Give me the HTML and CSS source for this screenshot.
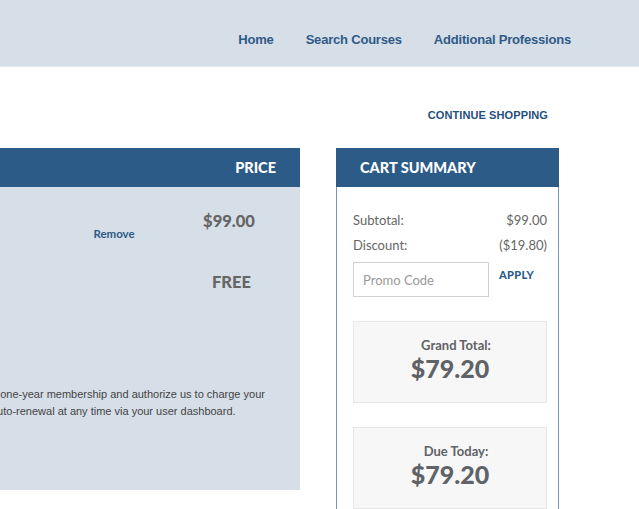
FILE: index.html
```html
<!DOCTYPE html>
<html lang="en">
<head>
<meta charset="utf-8">
<title>Cart</title>
<link rel="stylesheet" href="styles.css">
</head>
<body>
<header class="topbar">
  <nav class="nav">
    <a class="nav-link" href="#">Home</a>
    <a class="nav-link" href="#">Search Courses</a>
    <a class="nav-link" href="#">Additional Professions</a>
  </nav>
</header>
<main class="page">
  <div class="continue-row">
    <a class="continue" href="#">CONTINUE SHOPPING</a>
  </div>
  <div class="columns">
    <section class="cart">
      <div class="cart-head">
        <span class="cart-head-price">PRICE</span>
      </div>
      <div class="cart-body">
        <div class="item">
          <div class="item-action"><a class="remove" href="#">Remove</a></div>
          <div class="item-price">$99.00</div>
        </div>
        <div class="item item-free">
          <div class="item-action"></div>
          <div class="item-price">FREE</div>
        </div>
        <p class="terms">a one-year membership and authorize us to charge your<br>auto-renewal at any time via your user dashboard.</p>
      </div>
    </section>
    <aside class="summary">
      <div class="summary-head">CART SUMMARY</div>
      <div class="summary-body">
        <div class="line"><span>Subtotal:</span><span>$99.00</span></div>
        <div class="line"><span>Discount:</span><span>($19.80)</span></div>
        <div class="promo">
          <input class="promo-input" type="text" placeholder="Promo Code">
          <a class="apply" href="#">APPLY</a>
        </div>
        <div class="total-box">
          <div class="total-label">Grand Total:</div>
          <div class="total-value">$79.20</div>
        </div>
        <div class="total-box">
          <div class="total-label">Due Today:</div>
          <div class="total-value">$79.20</div>
        </div>
      </div>
    </aside>
  </div>
</main>
</body>
</html>
```
FILE: styles.css
```css
* { box-sizing: border-box; }
html, body { margin: 0; padding: 0; background: #fff; overflow: hidden; }
body { font-family: Lato, "Liberation Sans", Arial, sans-serif; color: #666; }
a { text-decoration: none; }

.topbar {
  height: 67px;
  background: #d6dee8;
  border-bottom: 1px solid #e3e8ee;
  display: flex;
  justify-content: flex-end;
  align-items: center;
  padding-right: 68px;
}
.nav { display: flex; gap: 32px; padding-top: 12px; }
.nav-link {
  font-family: "Liberation Sans", Arial, sans-serif;
  font-weight: bold;
  font-size: 13px;
  letter-spacing: -0.2px;
  color: #2f5b87;
}

.page { padding-top: 41px; }
.continue-row {
  display: flex;
  justify-content: flex-end;
  padding-right: 91px;
  padding-top: 1px;
  height: 40px;
}
.continue {
  font-family: "Liberation Sans", Arial, sans-serif;
  font-weight: bold;
  font-size: 11px;
  color: #244f7b;
  letter-spacing: 0.1px;
}

.columns { display: flex; gap: 36px; align-items: flex-start; }

.cart { width: 300px; flex: none; overflow: hidden; }
.cart-head {
  height: 39px;
  background: #2c5b87;
  display: flex;
  align-items: center;
  justify-content: flex-end;
  padding-right: 24px;
}
.cart-head-price { color: #fff; font-weight: 900; font-size: 14.5px; }
.cart-body { background: #d6dee8; height: 303px; padding-top: 24px; }
.item { display: flex; justify-content: flex-end; padding-right: 21px; }
.item-action { width: 130px; padding-top: 11px; text-align: center; }
.remove { font-size: 11.5px; font-weight: bold; color: #2c5b87; }
.item-price {
  width: 100px;
  text-align: center;
  font-size: 16.5px;
  font-weight: 900;
  color: #666;
  height: 20px;
  line-height: 20px;
}
.item-free { margin-top: 31px; }
.item-free .item-action { padding-top: 0; }
.item-free .item-price { padding-left: 5px; }
.terms {
  margin: 94px 0 0 -9px;
  font-family: "Liberation Sans", Arial, sans-serif;
  font-size: 11px;
  line-height: 17px;
  color: #444;
  white-space: nowrap;
}

.summary {
  width: 223px;
  flex: none;
  border: 1px solid #7594b6;
  border-top: none;
  border-bottom: none;
  height: 400px;
}
.summary-head {
  height: 39px;
  background: #2c5b87;
  color: #fff;
  font-weight: 900;
  font-size: 14.5px;
  display: flex;
  align-items: center;
  padding-left: 24px;
  margin: 0 -1px;
}
.summary-body { padding: 25px 11px 0 16px; }
.line {
  display: flex;
  justify-content: space-between;
  font-size: 13px;
  line-height: 17px;
  height: 25px;
  color: #666;
}
.promo { display: flex; align-items: flex-start; gap: 10px; }
.promo-input {
  width: 136px;
  height: 35px;
  border: 1px solid #cfd3d8;
  padding: 0 9px;
  font-family: Lato, sans-serif;
  font-size: 13px;
  color: #666;
  background: #fff;
  outline: none;
}
.promo-input::placeholder { color: #999; }
.apply {
  font-size: 11px;
  font-weight: 900;
  color: #2c5b87;
  letter-spacing: 0.3px;
  padding-top: 6px;
}
.total-box {
  margin-top: 24px;
  height: 82px;
  background: #f7f7f7;
  border: 1px solid #e6e6e6;
  text-align: center;
  padding-top: 15px;
}
.total-label { font-size: 13px; font-weight: bold; color: #5f6266; line-height: 16px; padding-left: 12px; }
.total-value { font-size: 25px; font-weight: 900; color: #5f6266; line-height: 30px; }
```
